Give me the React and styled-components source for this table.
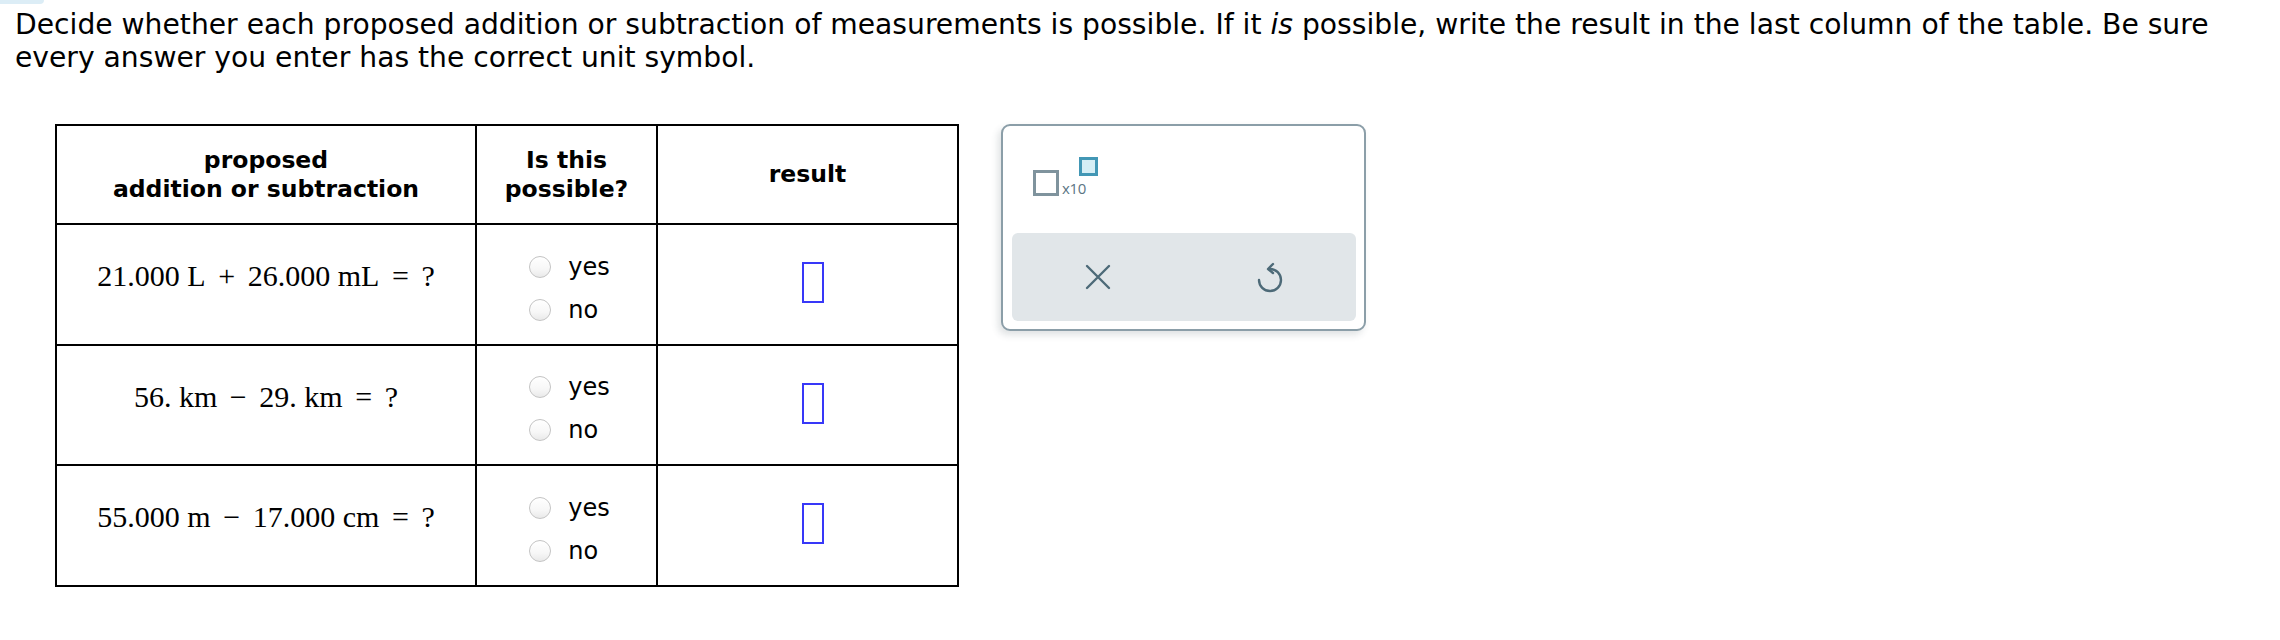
import React from 'react';
import styled, { createGlobalStyle } from 'styled-components';

const Global = createGlobalStyle`
  html, body { margin: 0; padding: 0; background: #fff; }
  body { font-family: "DejaVu Sans", Verdana, sans-serif; color: #000; }
`;

const Page = styled.div`
  position: relative;
  width: 2280px;
  min-height: 640px;
`;

const CornerTab = styled.div`
  position: absolute;
  left: 0;
  top: 0;
  width: 44px;
  height: 4px;
  background: #dcedf6;
  border-bottom-right-radius: 5px;
`;

const Prompt = styled.p`
  margin: 0;
  padding: 8px 0 0 15px;
  font-size: 28.2px;
  line-height: 33px;
`;

const Workspace = styled.div`
  display: flex;
  align-items: flex-start;
  gap: 42px;
  margin-top: 50px;
  padding-left: 55px;
`;

const Grid = styled.table`
  border-collapse: collapse;
  table-layout: fixed;
  width: 904px;
`;

const Row = styled.tr`
  height: ${p => p.$h}px;
`;

const HeadCell = styled.th`
  border: 2px solid #000;
  padding: 0;
  font-size: 23.5px;
  line-height: 29px;
  font-weight: bold;
  text-align: center;
  vertical-align: middle;
`;

const Cell = styled.td`
  border: 2px solid #000;
  padding: ${p => p.$pad || '0'};
  text-align: center;
  vertical-align: middle;
`;

const Expr = styled.span`
  font-family: "Liberation Serif", "Times New Roman", serif;
  font-size: 30px;
  white-space: nowrap;
`;

const Unit = styled.span`
  margin-left: 0.25em;
`;

const Op = styled.span`
  margin: 0 0.42em;
`;

const Choices = styled.div`
  display: inline-flex;
  flex-direction: column;
  align-items: flex-start;
`;

const Choice = styled.label`
  display: flex;
  align-items: center;
  gap: 17px;
  height: 43px;
  font-size: 24px;
  cursor: pointer;
`;

const Radio = styled.span`
  width: 22px;
  height: 22px;
  box-sizing: border-box;
  border-radius: 50%;
  border: 1px solid #c4c4c4;
  background: linear-gradient(180deg, #ffffff 0%, #f7f7f7 60%, #e9e9e9 100%);
  box-shadow: inset 0 1px 1px rgba(255,255,255,0.9);
`;

const AnswerBox = styled.span`
  display: inline-block;
  width: 22px;
  height: 41px;
  box-sizing: border-box;
  border: 2px solid #3838f8;
  vertical-align: middle;
`;

const Panel = styled.div`
  width: 365px;
  height: 207px;
  box-sizing: border-box;
  border: 2px solid #8b9ea8;
  border-radius: 9px;
  background: #fff;
  box-shadow: -3px 4px 7px rgba(60, 80, 90, 0.16);
  display: flex;
  flex-direction: column;
  padding: 0 8px 8px 9px;
`;

const TopArea = styled.div`
  flex: 1;
  padding: 31px 0 0 21px;
`;

const Sci = styled.div`
  display: flex;
  align-items: flex-start;
`;

const BaseBox = styled.span`
  width: 26px;
  height: 26px;
  box-sizing: border-box;
  border: 3px solid #7f939d;
  margin-top: 13px;
`;

const Times = styled.span`
  font-family: "Open Sans", Lato, sans-serif;
  font-size: 15px;
  line-height: 15px;
  color: #5b7583;
  margin: 24px 0 0 3px;
  letter-spacing: -0.3px;
`;

const SupBox = styled.span`
  width: 19px;
  height: 19px;
  box-sizing: border-box;
  border: 3px solid #4297b5;
  background: #d5eef5;
  margin-left: -7px;
`;

const ActionBar = styled.div`
  height: 88px;
  border-radius: 6px;
  background: #e1e6e9;
  display: grid;
  grid-template-columns: 1fr 1fr;
`;

const ActionButton = styled.button`
  border: 0;
  background: transparent;
  display: flex;
  align-items: center;
  justify-content: center;
  padding: 0;
  cursor: pointer;
  color: #4d6a78;
`;

const CloseIcon = () => (
  <svg width="26" height="26" viewBox="0 0 26 26" fill="none" stroke="currentColor" strokeWidth="2.4" strokeLinecap="round">
    <path d="M2 2 L24 24 M24 2 L2 24" />
  </svg>
);

const UndoIcon = () => (
  <svg width="28" height="32" viewBox="0 0 28 32" fill="none" stroke="currentColor" strokeWidth="2.4" strokeLinecap="round" strokeLinejoin="round">
    <path d="M14 8 A11 11 0 1 1 3 19" />
    <path d="M17 3 L12 8 L17 12" />
  </svg>
);

const rows = [
  { h: 121, a: '21.000', au: 'L', op: '+', b: '26.000', bu: 'mL' },
  { h: 120, a: '56.', au: 'km', op: '\u2212', b: '29.', bu: 'km' },
  { h: 121, a: '55.000', au: 'm', op: '\u2212', b: '17.000', bu: 'cm' },
];

export default function App() {
  return (
    <Page>
      <Global />
      <CornerTab />
      <Prompt>
        Decide whether each proposed addition or subtraction of measurements is possible. If it <i>is</i> possible, write the result in the last column of the table. Be sure every answer you enter has the correct unit symbol.
      </Prompt>
      <Workspace>
        <Grid>
          <colgroup>
            <col style={{ width: 420 }} />
            <col style={{ width: 181 }} />
            <col style={{ width: 301 }} />
          </colgroup>
          <thead>
            <Row $h={99}>
              <HeadCell>proposed<br />addition or subtraction</HeadCell>
              <HeadCell>Is this<br />possible?</HeadCell>
              <HeadCell>result</HeadCell>
            </Row>
          </thead>
          <tbody>
            {rows.map((r, i) => (
              <Row key={i} $h={r.h}>
                <Cell $pad="0 0 17px 0">
                  <Expr>
                    {r.a}<Unit>{r.au}</Unit><Op>{r.op}</Op>{r.b}<Unit>{r.bu}</Unit><Op>=</Op>?
                  </Expr>
                </Cell>
                <Cell $pad="7px 0 0 6px">
                  <Choices>
                    <Choice><Radio />yes</Choice>
                    <Choice><Radio />no</Choice>
                  </Choices>
                </Cell>
                <Cell $pad="0 0 4px 10px">
                  <AnswerBox />
                </Cell>
              </Row>
            ))}
          </tbody>
        </Grid>
        <Panel>
          <TopArea>
            <Sci>
              <BaseBox />
              <Times>x10</Times>
              <SupBox />
            </Sci>
          </TopArea>
          <ActionBar>
            <ActionButton aria-label="clear"><CloseIcon /></ActionButton>
            <ActionButton aria-label="undo"><UndoIcon /></ActionButton>
          </ActionBar>
        </Panel>
      </Workspace>
    </Page>
  );
}
